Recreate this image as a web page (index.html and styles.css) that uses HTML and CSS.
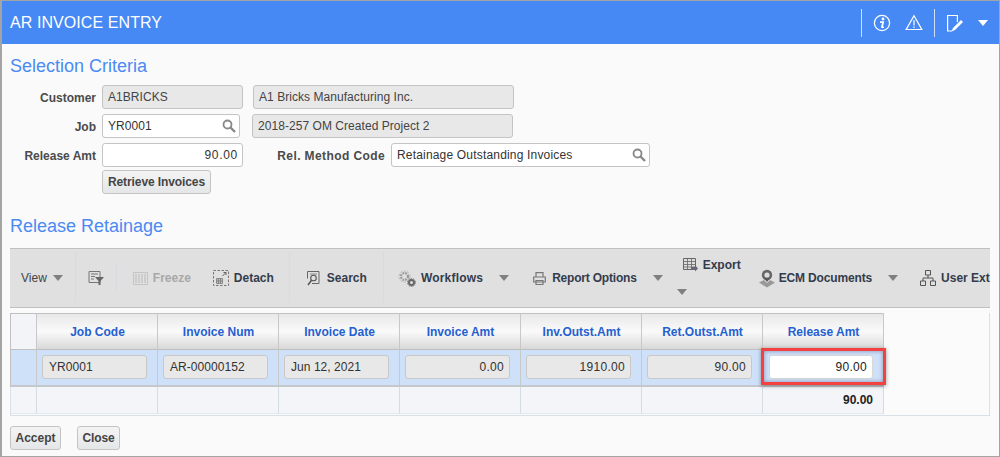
FILE: index.html
```html
<!DOCTYPE html>
<html lang="en">
<head>
<meta charset="utf-8">
<title>AR Invoice Entry</title>
<link rel="stylesheet" href="styles.css">
</head>
<body>
<div class="window">
  <header class="titlebar">
    <h1 class="title">AR INVOICE ENTRY</h1>
    <div class="title-tools">
      <span class="vsep"></span>
      <svg class="ti ti-info" width="18" height="18" viewBox="0 0 18 18"><circle cx="9" cy="9" r="7.6" fill="none" stroke="#fff" stroke-width="1.3"/><circle cx="10" cy="5" r="1.4" fill="#fff"/><path d="M7 8.200h3.200L8.900 13c-.1.600.5.700 1.800-.2" fill="none" stroke="#fff" stroke-width="1.700"/></svg>
      <svg class="ti ti-warn" width="18" height="18" viewBox="0 0 18 18"><path d="M9 1.800 16.800 15.500H1.200Z" fill="none" stroke="#fff" stroke-width="1.200"/><path d="M9 6v5.500M9 12.500v1.500" stroke="#fff" stroke-width="1.200"/></svg>
      <span class="vsep vsep2"></span>
      <svg class="ti ti-edit" width="18" height="20" viewBox="0 0 18 20"><path d="M5 18H.6V2.500H10.400V9" fill="none" stroke="#fff" stroke-width="1.200"/><path d="M4.500 18.500 6 15 14 7l2 2-8 8Z" fill="#fff"/></svg>
      <span class="title-caret"></span>
    </div>
  </header>

  <main class="content">
    <h2 class="section first">Selection Criteria</h2>
    <div class="row">
      <label class="lbl">Customer</label>
      <div class="field ro w141">A1BRICKS</div>
      <div class="field ro w261 gap10">A1 Bricks Manufacturing Inc.</div>
    </div>
    <div class="row">
      <label class="lbl">Job</label>
      <div class="field w138">YR0001
        <svg class="lens" width="14" height="14" viewBox="0 0 14 14"><circle cx="5.500" cy="5.500" r="4" fill="none" stroke="#888" stroke-width="1.800"/><path d="M8.500 8.500 13 13" stroke="#888" stroke-width="2.400"/></svg>
      </div>
      <div class="field ro w261 gap12">2018-257 OM Created Project 2</div>
    </div>
    <div class="row">
      <label class="lbl">Release Amt</label>
      <div class="field w141 right num">90.00</div>
      <label class="lbl lbl2">Rel. Method Code</label>
      <div class="field w259 wide">Retainage Outstanding Invoices
        <svg class="lens" width="14" height="14" viewBox="0 0 14 14"><circle cx="5.500" cy="5.500" r="4" fill="none" stroke="#888" stroke-width="1.800"/><path d="M8.500 8.500 13 13" stroke="#888" stroke-width="2.400"/></svg>
      </div>
    </div>
    <div class="row row-btn"><button class="btn b-retrieve">Retrieve Invoices</button></div>

    <h2 class="section second">Release Retainage</h2>

    <div class="toolbar">
      <span class="tb view">View</span><span class="caret c-view"></span>
      <span class="tsep s1"></span>
      <svg class="ic i-filter" width="17" height="16" viewBox="0 0 17 16"><path d="M1 1.500h11v11H1z" fill="none" stroke="#777"/><path d="M3 4h7M3 6.500h4M3 9h3" stroke="#777"/><path d="M7 7h9l-3.500 4v4h-2v-4z" fill="#666"/></svg>
      <span class="tsep s2"></span>
      <svg class="ic i-freeze" width="15" height="13" viewBox="0 0 15 13"><path d="M.5.500h14v12H.5z" fill="none" stroke="#c4c4c4"/><path d="M3 2v9M6 2v9M9 2v9M12 2v9" stroke="#c4c4c4" stroke-width="1.300"/></svg>
      <span class="tb dis">Freeze</span>
      <svg class="ic i-detach" width="16" height="16" viewBox="0 0 16 16"><path d="M.5.500h15v15H.5z" fill="none" stroke="#777" stroke-dasharray="2.500 1.500"/><path d="M3.500 8.500h6v5h-6zM3.500 10.200h6M3.500 11.800h6M5.500 8.500v5M7.500 8.500v5" fill="none" stroke="#777" stroke-width=".8"/><path d="M9.500 6 13 2.500M10.500 2.500H13V5" fill="none" stroke="#666"/></svg>
      <span class="tb">Detach</span>
      <span class="tsep s3"></span>
      <svg class="ic i-search" width="13" height="15" viewBox="0 0 13 15"><path d="M.5.500h11.500v12H5" fill="none" stroke="#666"/><path d="M.5.500v7" stroke="#666"/><path d="M3 3h7" stroke="#888"/><circle cx="6.500" cy="7" r="2.800" fill="none" stroke="#555" stroke-width="1.100"/><path d="M4.500 9.200 1 14" stroke="#555" stroke-width="1.500"/></svg>
      <span class="tb">Search</span>
      <span class="tsep s4"></span>
      <svg class="ic i-wf" width="18" height="17" viewBox="0 0 18 17"><circle cx="6.500" cy="6.500" r="3.500" fill="none" stroke="#999" stroke-width="2.200" stroke-dasharray="1.800 1"/><circle cx="6.500" cy="6.500" r="5.500" fill="none" stroke="#aaa" stroke-width=".8" stroke-dasharray="2 1.500"/><circle cx="13.500" cy="12.500" r="2.500" fill="none" stroke="#666" stroke-width="2"/><circle cx="13.500" cy="12.500" r="4" fill="none" stroke="#777" stroke-width="1" stroke-dasharray="1.500 1"/></svg>
      <span class="tb t-wf">Workflows</span><span class="caret c-wf"></span>
      <svg class="ic i-print" width="13" height="13" viewBox="0 0 13 13"><path d="M3 4.500V.700h7v3.800M.7 5h11.600v5H.7zM3 8.500h7v4H3z" fill="none" stroke="#777" stroke-width="1.200"/></svg>
      <span class="tb t-rep">Report Options</span><span class="caret c-rep"></span>
      <div class="export">
        <div class="export-top">
          <svg class="ic" width="15" height="14" viewBox="0 0 15 14"><path d="M.5.500h12v11H.5z" fill="#ddd" stroke="#666"/><path d="M.5 3.500h12M.5 6.500h12M.5 9h12M4.500.500v11M8.500.500v11" stroke="#666" stroke-width=".8"/><path d="M8 9h4V7l3 3.500-3 3V12H8z" fill="#667"/></svg>
          <span class="tb">Export</span>
        </div>
        <span class="caret c-exp"></span>
      </div>
      <svg class="ic i-ecm" width="16" height="19" viewBox="0 0 16 19"><circle cx="8" cy="6" r="5.200" fill="#666"/><circle cx="8" cy="6" r="2.600" fill="#ddd"/><path d="M5.500 9.500 8 13l2.500-3.500z" fill="#555"/><path d="M0 13.500 5 11l3 3 3-3 5 2.500L8 18.500Z" fill="#999"/></svg>
      <span class="tb t-ecm">ECM Documents</span><span class="caret c-ecm"></span>
      <svg class="ic i-user" width="16" height="16" viewBox="0 0 16 16"><path d="M5.500.500h5v4.500h-5zM.5 11h5v4.500h-5zM10.500 11h5v4.500h-5zM8 5v3M3 11V8h10v3" fill="none" stroke="#555"/></svg>
      <span class="tb">User Extensions</span>
    </div>

    <div class="grid">
      <div class="table">
        <div class="cell hcorner"></div>
        <div class="cell hd">Job Code</div>
        <div class="cell hd">Invoice Num</div>
        <div class="cell hd">Invoice Date</div>
        <div class="cell hd">Invoice Amt</div>
        <div class="cell hd">Inv.Outst.Amt</div>
        <div class="cell hd">Ret.Outst.Amt</div>
        <div class="cell hd">Release Amt</div>

        <div class="cell rw first-col"></div>
        <div class="cell rw"><div class="gf">YR0001</div></div>
        <div class="cell rw"><div class="gf">AR-00000152</div></div>
        <div class="cell rw"><div class="gf">Jun 12, 2021</div></div>
        <div class="cell rw"><div class="gf right">0.00</div></div>
        <div class="cell rw"><div class="gf right">1910.00</div></div>
        <div class="cell rw"><div class="gf right">90.00</div></div>
        <div class="cell rw hl">
          <div class="gf right live">90.00</div>
          <span class="callout"></span>
        </div>

        <div class="cell ft"></div>
        <div class="cell ft"></div>
        <div class="cell ft"></div>
        <div class="cell ft"></div>
        <div class="cell ft"></div>
        <div class="cell ft"></div>
        <div class="cell ft"></div>
        <div class="cell ft total">90.00</div>
      </div>
    </div>

    <div class="actions">
      <button class="btn b-accept">Accept</button>
      <button class="btn b-close">Close</button>
    </div>
  </main>
</div>
</body>
</html>
```
FILE: styles.css
```css
* { box-sizing: border-box; }
html, body { margin: 0; padding: 0; }
body { width: 1000px; height: 457px; overflow: hidden; font-family: "Liberation Sans", Arial, sans-serif; font-size: 12px; color: #444; }
.window { width: 1000px; height: 457px; border: 1px solid #a4a4a4; border-left-width: 2px; background: #fafafa; display: flex; flex-direction: column; overflow: hidden; }
.titlebar { height: 43px; flex: none; background: #4689f4; color: #fff; display: flex; align-items: center; justify-content: space-between; padding-left: 8px; }
.title { margin: 0; font-size: 16px; font-weight: 400; letter-spacing: .08px; }
.title-tools { display: flex; align-items: center; height: 100%; }
.vsep { width: 1px; height: 28px; background: #cfe0fb; }
.ti { display: block; flex: none; }
.ti-info { margin-left: 11px; }
.ti-warn { margin-left: 14px; }
.vsep2 { margin-left: 11px; }
.ti-edit { margin-left: 12px; }
.title-caret { width: 0; height: 0; border-left: 5px solid transparent; border-right: 5px solid transparent; border-top: 6px solid #fff; margin: 0 11px 0 13px; }
.content { flex: 1; padding: 0 8px; }
.section { margin: 0; font-size: 18px; font-weight: 400; color: #4a8af4; line-height: 21px; }
.first { padding-top: 12px; height: 41px; }
.second { margin-top: 22px; height: 32px; }
.row { display: flex; align-items: center; height: 24px; margin-bottom: 5px; }
.row-btn { margin: -2px 0 0 92px; }
.lbl { width: 92px; padding: 1px 6px 0 0; text-align: right; font-weight: 700; color: #4a4a4a; flex: none; }
.lbl2 { width: 142px; margin-right: 6px; padding-right: 0; letter-spacing: .4px; }
.field { height: 24px; border: 1px solid #c4c4c4; border-radius: 3px; background: #fff; padding: 0 5px; line-height: 23px; color: #333; letter-spacing: .05px; position: relative; flex: none; white-space: nowrap; }
.ro { background: #e8e8e8; color: #444; }
.right { text-align: right; }
.num { letter-spacing: .7px; padding-right: 4px; }
.wide { letter-spacing: .18px; }
.w141 { width: 141px; }
.w138 { width: 138px; }
.w261 { width: 261px; }
.w259 { width: 259px; }
.gap10 { margin-left: 10px; }
.gap12 { margin-left: 12px; }
.lens { position: absolute; right: 3px; top: 4px; }
.btn { font: 700 12px "Liberation Sans", Arial, sans-serif; color: #444; height: 24px; padding: 0; border: 1px solid #c4c4c4; border-radius: 3px; background: linear-gradient(#f4f4f4, #e4e6e8); letter-spacing: -.1px; }
.b-retrieve { width: 109px; }
.b-accept { width: 51px; letter-spacing: 0; }
.b-close { width: 43px; }
.toolbar { width: 980px; height: 60px; background: #e0e0e0; border-top: 1px solid #c0c0c0; border-bottom: 1px solid #c0c0c0; display: flex; align-items: center; overflow: hidden; white-space: nowrap; }
.tb { font-weight: 700; color: #333c4c; flex: none; }
.view { font-weight: 400; margin-left: 11px; color: #444; }
.dis { color: #a8a8a8; margin-left: 5px; }
.t-wf { letter-spacing: .2px; }
.t-rep { letter-spacing: -.2px; }
.t-ecm { letter-spacing: -.15px; }
.caret { flex: none; width: 0; height: 0; border-left: 5px solid transparent; border-right: 5px solid transparent; border-top: 6px solid #808080; }
.ic { flex: none; display: block; }
.c-view { margin-left: 6px; }
.tsep { width: 1px; align-self: stretch; margin: 2px 0 4px; background: #d8dce2; flex: none; }
.s1 { margin-left: 12px; }
.i-filter { margin-left: 12px; }
.s2 { margin: 14px 0 14px 11px; }
.i-freeze { margin-left: 16px; }
.i-detach { margin-left: 22px; margin-right: 5px; }
.s3 { margin-left: 15px; }
.i-search { margin-left: 17px; margin-right: 7px; }
.s4 { margin-left: 16px; }
.i-wf { margin-left: 14px; margin-right: 5px; }
.c-wf { margin-left: 16px; }
.i-print { margin-left: 24px; margin-right: 6px; }
.c-rep { margin-left: 16px; }
.export { flex: none; width: 82px; margin-left: 14px; height: 100%; display: flex; flex-direction: column; padding-top: 9px; }
.export-top { display: flex; align-items: center; margin-left: 6px; }
.export-top .tb { margin-left: 5px; }
.c-exp { margin-top: 17px; }
.i-ecm { margin-right: 4px; }
.c-ecm { margin-left: 16px; }
.i-user { margin-left: 22px; margin-right: 5px; }
.grid { width: 980px; height: 103px; margin-top: 5px; border: 1px solid #d8e0e8; border-top: 0; background: #fbfbfb; }
.table { display: grid; grid-template-columns: 26px repeat(7, 121px); grid-template-rows: 37px 37px 27px; width: 873px; }
.cell { border-right: 1px solid #c8c8c8; min-width: 0; }
.hcorner { margin-left: -1px; background: #f3f4f8; border-top: 1px solid #c0c0c0; border-left: 1px solid #c0c0c0; border-bottom: 1px solid #c0c0c0; }
.hd { border-top: 1px solid #c0c0c0; border-bottom: 1px solid #c0c0c0; background: linear-gradient(#e8e8e8, #fafafa 50%, #d8d8d8); color: #2460d0; font-weight: 700; text-align: center; line-height: 36px; padding-left: 1px; }
.rw { background: #cfe0f9; border-bottom: 2px solid #c4c8cc; padding: 5px 10px 0 5px; position: relative; }
.first-col { margin-left: -1px; border-left: 1px solid #c0c0c0; }
.hl { padding-left: 6px; }
.gf { height: 24px; border: 1px solid #c8c8c8; border-radius: 3px; background: #e8e8e8; color: #333; line-height: 22px; padding: 0 6px; letter-spacing: .05px; white-space: nowrap; }
.gf.right { letter-spacing: .3px; padding-right: 5px; }
.live { background: #fff; color: #222; border-color: #d8d8d8; }
.callout { position: absolute; left: -2px; top: -2px; width: 125px; height: 37px; border: 3px solid #f44040; box-shadow: 0 1px 4px rgba(0,0,0,.4), inset 0 0 4px rgba(40,50,80,.45); }
.ft { background: #f3f5f9; border-right-color: #d4dce4; border-bottom: 1px solid #e4e9ef; }
.total { text-align: right; font-weight: 700; color: #222; padding: 6px 10px 0 0; }
.actions { display: flex; gap: 16px; margin-top: 10px; }
```
